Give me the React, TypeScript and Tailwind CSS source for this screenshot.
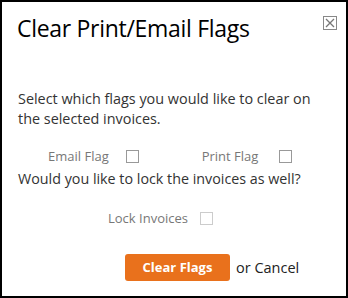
export default function App() {
  return (
    <div className="h-[298px] w-[348px] border-2 border-black bg-white font-['Open_Sans',sans-serif] text-[#222]">
      <div className="flex items-start justify-between pl-[15px] pr-[9px] pt-[11px]">
        <h1 className="text-[23px] leading-[30px] font-normal tracking-[-0.3px] text-black">Clear Print/Email Flags</h1>
        <button type="button" className="mt-[3px] flex h-[14px] w-[14px] items-center justify-center border border-[#888] bg-white">
          <svg width="10" height="10" viewBox="0 0 10 10">
            <path d="M1 1L9 9M9 1L1 9" stroke="#777" strokeWidth="1.3" />
          </svg>
        </button>
      </div>

      <p className="mt-[46px] px-[16px] text-[14.4px] leading-[20px] text-[#333]">
        Select which flags you would like to clear on the selected invoices.
      </p>

      <div className="mt-[17px] flex items-center text-[13px] leading-[20px] text-[#777]">
        <span className="ml-[46px]">Email Flag</span>
        <span className="ml-[17px] h-[13px] w-[13px] border border-[#999]" />
        <span className="ml-[63px]">Print Flag</span>
        <span className="ml-[21px] h-[13px] w-[13px] border border-[#999]" />
      </div>

      <p className="mt-[3px] px-[16px] text-[14.3px] leading-[20px] text-[#333]">
        Would you like to lock the invoices as well?
      </p>

      <div className="mt-[19px] flex items-center text-[13px] leading-[20px] text-[#777]">
        <span className="ml-[106px]">Lock Invoices</span>
        <span className="ml-[12px] h-[13px] w-[13px] border border-[#ccc]" />
      </div>

      <div className="mt-[26px] flex items-center pl-[123px]">
        <button
          type="button"
          className="h-[27px] w-[105px] rounded-[3px] bg-[#e9711c] text-[13px] font-bold text-white"
        >
          Clear Flags
        </button>
        <span className="ml-[6px] text-[14.5px] text-[#222]">or Cancel</span>
      </div>
    </div>
  );
}
